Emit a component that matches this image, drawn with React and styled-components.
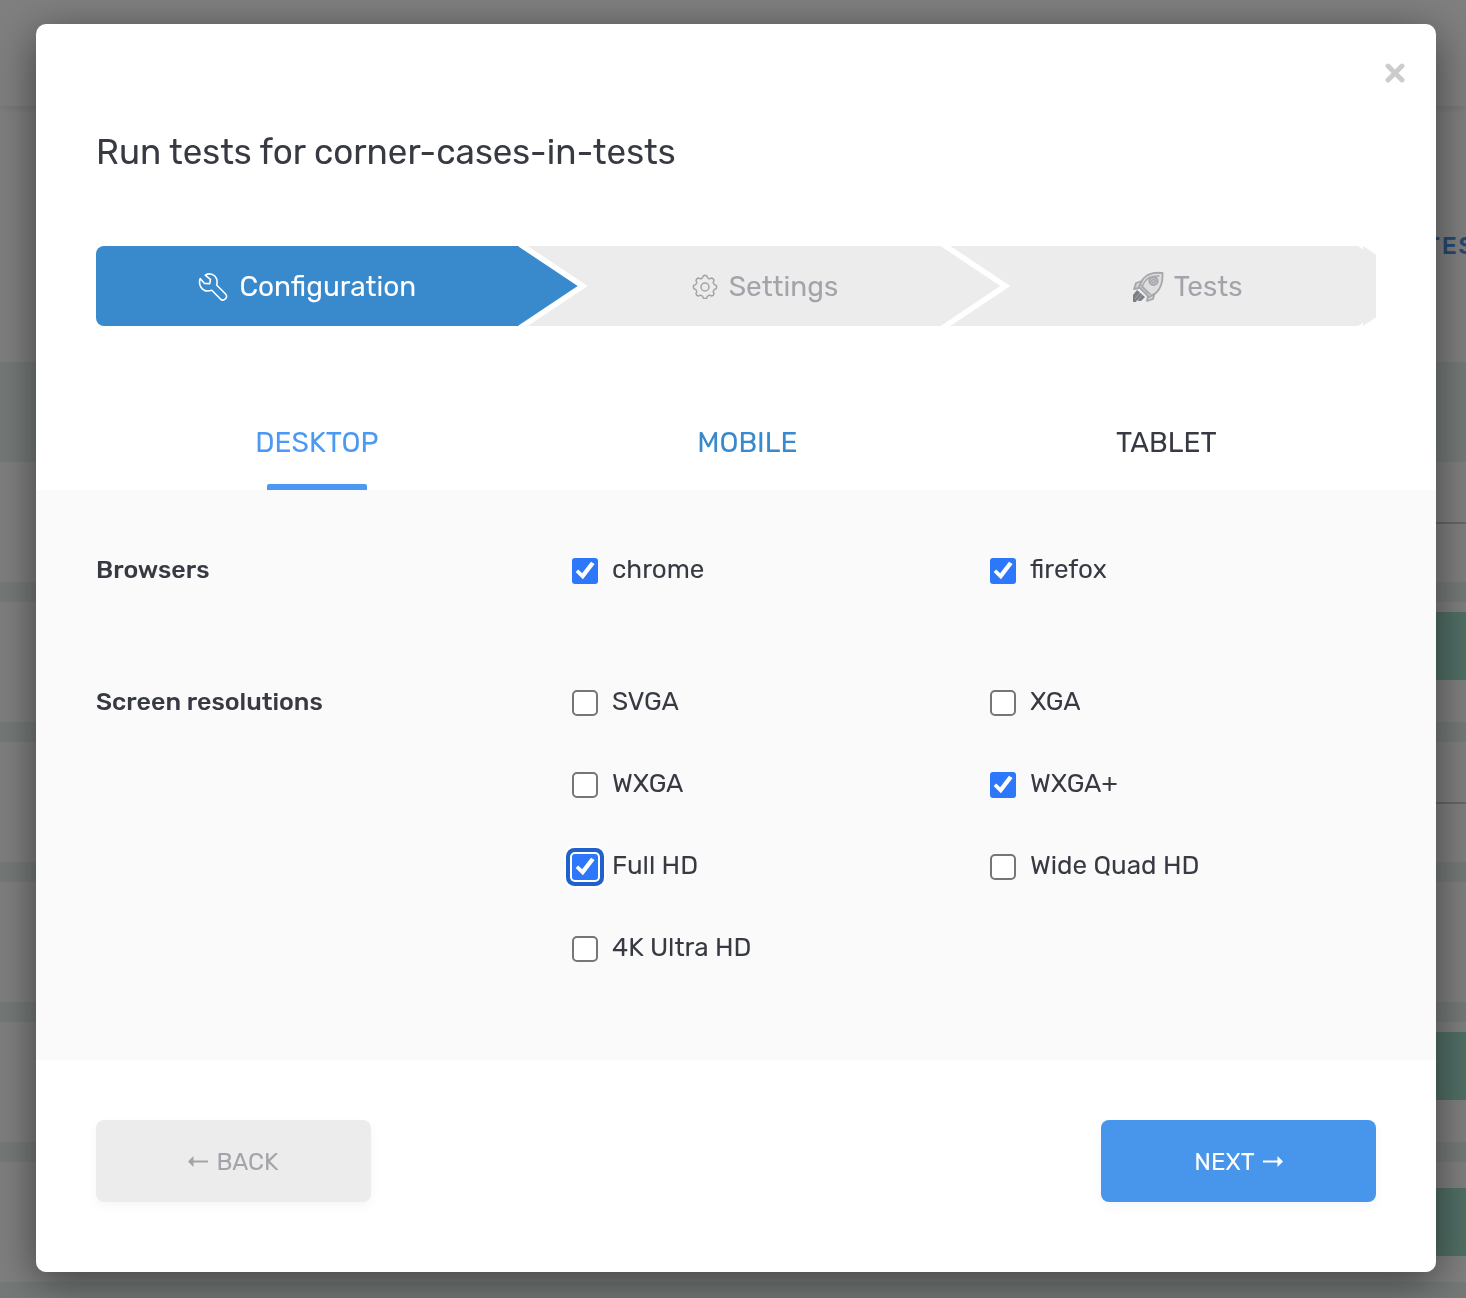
import React, {useState} from 'react';
import styled, {createGlobalStyle} from 'styled-components';


const ROWS = ['line', 'button', 'line', '', 'button', 'lowButton'];

const TABS = ['Desktop', 'Mobile', 'Tablet'];

const GROUPS = [
    {
        title: 'Browsers',
        items: ['chrome', 'firefox'],
    },
    {
        title: 'Screen resolutions',
        items: ['SVGA', 'XGA', 'WXGA', 'WXGA+', 'Full HD', 'Wide Quad HD', '4K Ultra HD'],
    },
];

const WrenchIcon = () => (
    <svg width="30" height="30" viewBox="0 0 30 30" fill="none" stroke="currentColor" strokeWidth="1.6" strokeLinejoin="round" aria-hidden="true">
        <path d="M7.2 4.2C11.5 1.6 16.6 3.2 18.4 7.4c.9 2.2.9 4.4.2 6.6l8.8 8.7c3.2 3.8-1.6 8.4-5.2 5.1L13.8 19.3C9.6 20.6 5.300 19.800 3 16.200 1.400 13.700 1.200 10.400 2.200 7.600l4.400 4.900 5.200.1.600-4.200z" />
    </svg>
);

// eight rounded teeth around the hub
const gearPath = () => {
    const point = (r, deg) => {
        const a = deg * Math.PI / 180;
        return `${(13 + r * Math.cos(a)).toFixed(2)} ${(14 + r * Math.sin(a)).toFixed(2)}`;
    };
    let d = `M${point(11.2, -9)}`;
    for (let i = 0; i < 8; i++) {
        const a = i * 45;
        d += `Q${point(12.2, a)} ${point(11.2, a + 9)}`;
        d += `C${point(8.8, a + 14)} ${point(8.8, a + 31)} ${point(11.2, a + 36)}`;
    }
    return d + 'z';
};

const GearIcon = () => (
    <svg width="26" height="26" viewBox="0 0 26 26" fill="none" stroke="currentColor" strokeWidth="1.5" strokeLinejoin="round" aria-hidden="true">
        <path d={gearPath()} />
        <circle cx="13" cy="14" r="4" />
    </svg>
);

const RocketIcon = () => (
    <svg width="31" height="31" viewBox="0 0 31 31" fill="none" stroke="#a6a7ab" strokeWidth="1.8" strokeLinejoin="round" aria-hidden="true">
        <path d="M0 31v-7l4-5 8 7-4 4H6l-2-1-1 2z" fill="#7c7d85" stroke="none" />
        <path d="M2 28l5-6M5 29l4-5" stroke="#a6a7ab" strokeWidth="1" />
        <path d="M9 10L3 12 1 18l5-1M15 25l-1 5 6-2 2-7" fill="#d0d0d3" />
        <path d="M29.500 2C21 1 14 3 10 8l-4 8 10 10 7-4c5-5 7-12 6.500-20z" fill="#dededf" />
        <path d="M26.500 5C19 4.500 14 7 11.500 11L9 16l7 7M8 14l10 10" strokeWidth="1.400" />
        <circle cx="20.500" cy="10" r="4.200" fill="#bdbdc1" />
        <path d="M18 10l3-2 2 2-3 2z" strokeWidth="1" />
    </svg>
);

const CloseIcon = () => (
    <svg width="20" height="20" viewBox="0 0 20 20" fill="none" stroke="currentColor" strokeWidth="4.900" strokeLinecap="round" aria-hidden="true">
        <path d="M3 3l14 14M17 3L3 17" />
    </svg>
);

const ArrowIcon = ({left}) => (
    <svg width="20" height="12" viewBox="0 0 20 12" fill="currentColor" aria-hidden="true">
        {left
            ? <path d="M0 5.500L5.500 0V4.500H20v2H5.500V11z" />
            : <path d="M20 5.500L14.500 0V4.500H0v2h14.500V11z" />}
    </svg>
);

const App = () => {

    const [tab, setTab] = useState('Desktop');
    const [selected, setSelected] = useState(['chrome', 'firefox', 'WXGA+', 'Full HD']);

    const toggle = item => {
        setSelected(selected.includes(item) ? selected.filter(i => i !== item) : [...selected, item]);
    };

    return (
        <>
            <GlobalStyle />
            <Page aria-hidden="true">
                <Header />
                <Hero>
                    <HeroLink>TES</HeroLink>
                </Hero>
                <Rows>
                    {ROWS.map((kind, i) => (
                        <Row key={i}>
                            {kind === 'line' && <Line />}
                            {kind.endsWith('utton') && <GreenBlock $low={kind === 'lowButton'} />}
                        </Row>
                    ))}
                </Rows>
            </Page>
            <Overlay>
                <Modal role="dialog" aria-modal="true" aria-labelledby="modal-title">
                    <Top>
                        <Close type="button" aria-label="Close"><CloseIcon /></Close>
                    </Top>
                    <Title id="modal-title">Run tests for corner-cases-in-tests</Title>
                    <Steps>
                        <Step $active><WrenchIcon />Configuration</Step>
                        <Step><GearIcon />Settings</Step>
                        <Step><RocketIcon />Tests</Step>
                    </Steps>
                    <Tabs role="tablist">
                        {TABS.map(name => (
                            <Tab
                                key={name}
                                type="button"
                                role="tab"
                                aria-selected={tab === name}
                                $active={tab === name}
                                $linked={name === 'Mobile'}
                                onClick={() => setTab(name)}
                            >
                                {name}
                            </Tab>
                        ))}
                    </Tabs>
                    <Panel role="tabpanel">
                        {GROUPS.map(group => (
                            <Group key={group.title}>
                                <Legend>{group.title}</Legend>
                                <Options>
                                    {group.items.map(item => (
                                        <Option key={item}>
                                            <Checkbox
                                                type="checkbox"
                                                autoFocus={item === 'Full HD'}
                                                checked={selected.includes(item)}
                                                onChange={() => toggle(item)}
                                            />
                                            <OptionText>{item}</OptionText>
                                        </Option>
                                    ))}
                                </Options>
                            </Group>
                        ))}
                    </Panel>
                    <Footer>
                        <Button type="button" disabled><ArrowIcon left />BACK</Button>
                        <Button type="button" $primary>NEXT<ArrowIcon /></Button>
                    </Footer>
                </Modal>
            </Overlay>
        </>
    )
};

export default App;

const GlobalStyle = createGlobalStyle`
    * {
        box-sizing: border-box;
    }

    body {
        margin: 0;
        color: #373a42;
        font-family: Rubik, Roboto, "Liberation Sans", sans-serif;
        font-size: 26px;
    }

    button {
        padding: 0;
        border: none;
        background: none;
        font-family: inherit;
        cursor: pointer;
    }
`;

const Page = styled.div`
    display: flex;
    flex-direction: column;
    min-height: 100vh;
    overflow: hidden;
    isolation: isolate;
    background: #eaf4f1;
`;

const Header = styled.div`
    height: 106px;
    background: #fff;
    box-shadow: 0 2px 8px rgba(0, 0, 0, 0.1);
    z-index: 1;
`;

const Hero = styled.div`
    display: flex;
    align-items: center;
    justify-content: flex-end;
    height: 256px;
    padding-top: 24px;
    background: #fff;
`;

const HeroLink = styled.span`
    margin-right: -10px;
    color: #4a90ea;
    font-size: 24px;
    font-weight: 500;
    letter-spacing: 2px;
`;

const Rows = styled.div`
    display: flex;
    flex-direction: column;
    gap: 20px;
    padding-top: 100px;
`;

const Row = styled.div`
    display: flex;
    justify-content: flex-end;
    height: 120px;
    background: #fff;
`;

const Line = styled.div`
    width: 50%;
    height: 2px;
    margin-top: 60px;
    background: #ccc;
`;

const GreenBlock = styled.div`
    width: 200px;
    height: 68px;
    margin-top: ${({$low}) => $low ? '26px' : '10px'};
    background: #a1ddcb;
`;

const Overlay = styled.div`
    position: fixed;
    inset: 0;
    padding: 24px 30px 24px 36px;
    overflow: auto;
    background: rgba(0, 0, 0, 0.5);
`;

const Modal = styled.div`
    border-radius: 10px;
    background: #fff;
    box-shadow: 0 10px 44px rgba(0, 0, 0, 0.5);
`;

const Top = styled.div`
    display: flex;
    justify-content: flex-end;
    padding: 39px 31px 0;
`;

const Close = styled.button`
    display: flex;
    color: #ccc;
`;

const Title = styled.h1`
    margin: 44px 60px 0;
    font-size: 35px;
    font-weight: 420;
    line-height: 50px;
`;

const Steps = styled.div`
    display: grid;
    grid-template-columns: repeat(3, minmax(0, 1fr));
    margin: 69px 60px 0;
    padding-right: 12px;
    border-radius: 8px 0 0 8px;
    overflow: hidden;
`;

const Step = styled.div`
    position: relative;
    display: flex;
    align-items: center;
    justify-content: center;
    gap: 11px;
    height: 80px;
    padding-left: 70px;
    background: ${({$active}) => $active ? '#3989cd' : '#ececec'};
    color: ${({$active}) => $active ? '#fff' : '#a3a4a9'};
    font-size: 28px;

    &:first-child {
        padding-left: 0;
    }

    &:last-child {
        gap: 10px;
        border-radius: 0 8px 8px 0;
    }

    &::before,
    &::after {
        content: '';
        position: absolute;
        top: 0;
        left: calc(100% - 1px);
        z-index: 1;
        width: 60px;
        height: 80px;
        background: inherit;
        clip-path: polygon(0 0, 100% 50%, 0 100%);
    }

    /* white chevron that parts a step from the next one */
    &::before {
        width: 70px;
        background: #fff;
        clip-path: polygon(0 0, 10px 0, 100% 50%, 10px 100%, 0 100%, 59px 50%);
    }
`;

const Tabs = styled.div`
    display: flex;
    justify-content: space-around;
    margin: 69px 60px 0;
`;

const Tab = styled.button`
    position: relative;
    height: 95px;
    color: ${({$active, $linked}) => $active ? '#4b99f2' : $linked ? '#3989cd' : '#373a42'};
    font-size: 28px;
    font-weight: 450;
    text-transform: uppercase;

    &::after {
        content: '';
        display: ${({$active}) => $active ? 'block' : 'none'};
        position: absolute;
        bottom: 0;
        left: calc(50% - 50px);
        width: 100px;
        height: 6px;
        border-radius: 2px 2px 0 0;
        background: #4b99f2;
    }
`;

const Panel = styled.div`
    display: flex;
    flex-direction: column;
    gap: 50px;
    padding: 40px 60px 70px;
    background: #fafafa;
`;

const Group = styled.fieldset`
    display: grid;
    grid-template-columns: 476fr 804fr;
    margin: 0;
    padding: 0;
    border: none;
`;

const Legend = styled.legend`
    float: left;
    padding: 0;
    font-size: 25px;
    font-weight: 500;
    line-height: 79px;
`;

const Options = styled.div`
    display: grid;
    grid-template-columns: 418fr 386fr;
`;

const Option = styled.label`
    display: flex;
    align-items: center;
    gap: 14px;
    height: 82px;
    cursor: pointer;
`;

const OptionText = styled.span`
    padding-bottom: 4px;
`;

const Checkbox = styled.input`
    flex: none;
    appearance: none;
    width: 26px;
    height: 26px;
    margin: 0;
    border: 2px solid #767676;
    border-radius: 5px;
    background: #fff;

    &:checked {
        border: none;
        border-radius: 3px;
        background: #2d78fa;
    }

    &:checked::before {
        content: '';
        display: block;
        width: 26px;
        height: 26px;
        background: #fff;
        clip-path: polygon(14% 54%, 24% 44%, 39% 59%, 73% 14%, 87% 23%, 42% 82%);
    }

    &:focus {
        outline: none;
        box-shadow: 0 0 0 2px #fff, 0 0 0 6px #2062c9, 0 0 0 8px #fff;
    }
`;

const Footer = styled.div`
    display: flex;
    justify-content: space-between;
    padding: 60px 60px 70px;
`;

const Button = styled.button`
    display: flex;
    align-items: center;
    justify-content: center;
    gap: 8px;
    width: 275px;
    height: 82px;
    padding-top: 2px;
    border-radius: 8px;
    background: ${({$primary}) => $primary ? '#4796ec' : '#ececec'};
    box-shadow: 0 4px 12px rgba(0, 0, 0, 0.04);
    color: ${({$primary}) => $primary ? '#fff' : '#a3a4a9'};
    font-size: 24px;
`;
